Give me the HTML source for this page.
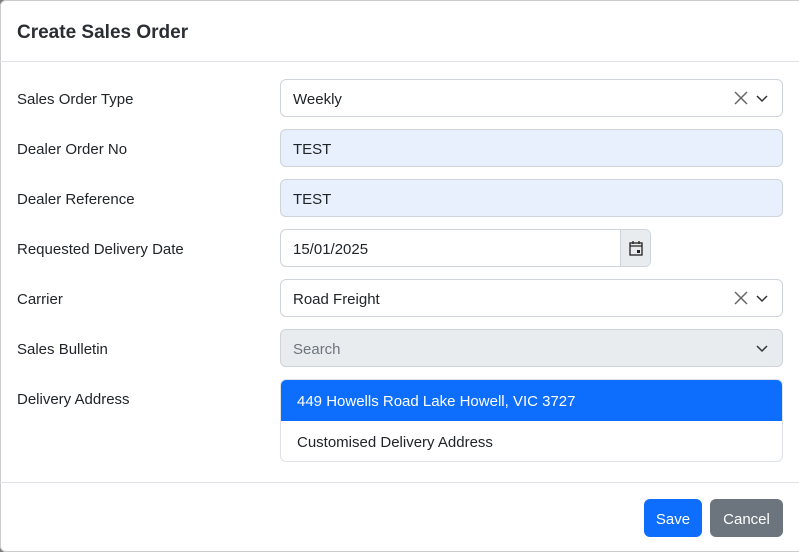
<!DOCTYPE html>
<html><head><style>
*{box-sizing:border-box}
body{margin:0;width:799px;height:552px;background:#7a7a7a;font-family:"Liberation Sans",sans-serif;color:#212529;overflow:hidden;position:relative}
.m{position:absolute;left:0;top:0;width:810px;height:552px;background:#fff;border-radius:6px;box-shadow:0 0 0 1px #ccc inset}
.h{height:62px;border-bottom:1px solid #dee2e6;padding:4px 17px 0;display:flex;align-items:center;font-size:19px;font-weight:bold;color:#2a2e33}
.lab{position:absolute;left:17px;font-size:15px;margin-top:1px}
.in{position:absolute;left:280px;width:503px;height:38px;border:1px solid #ced4da;border-radius:6px;font-size:15px;padding:2px 12px 0;display:flex;align-items:center}
.blue{background:#e8f0fe}
.ic{position:absolute;right:14px;top:11px;display:flex;gap:8px}
.f{position:absolute;top:482px;left:0;right:0;border-top:1px solid #dee2e6}
.b{position:absolute;top:499px;height:38px;border-radius:6px;color:#fff;font-size:15px;padding-top:2px;display:flex;align-items:center;justify-content:center}
</style></head><body><div class="m">
<div class="h">Create Sales Order</div>
<div class="lab" style="top:90px">Sales Order Type</div>
<div class="in" style="top:79px">Weekly<div class="ic"><svg width="14" height="14"><path d="M1 1L13 13M13 1L1 13" stroke="#666" stroke-width="1.5"/></svg><svg width="12" height="14"><path d="M1 5L6 10L11 5" stroke="#333" stroke-width="1.5" fill="none"/></svg></div></div>
<div class="lab" style="top:140px">Dealer Order No</div>
<div class="in blue" style="top:129px">TEST</div>
<div class="lab" style="top:190px">Dealer Reference</div>
<div class="in blue" style="top:179px">TEST</div>
<div class="lab" style="top:240px">Requested Delivery Date</div>
<div class="in" style="top:229px;width:371px">15/01/2025<div style="position:absolute;right:0;top:0;width:30px;height:36px;background:#e9ecef;border-left:1px solid #ced4da;border-radius:0 6px 6px 0"><svg width="14" height="16" style="position:absolute;left:8px;top:10px"><rect x="1" y="3" width="12" height="12" fill="none" stroke="#222" stroke-width="1.3"/><path d="M1 6H13M4 1V4M10 1V4" stroke="#222" stroke-width="1.3"/><rect x="8" y="10" width="3" height="3" fill="#222"/></svg></div></div>
<div class="lab" style="top:290px">Carrier</div>
<div class="in" style="top:279px">Road Freight<div class="ic"><svg width="14" height="14"><path d="M1 1L13 13M13 1L1 13" stroke="#666" stroke-width="1.5"/></svg><svg width="12" height="14"><path d="M1 5L6 10L11 5" stroke="#333" stroke-width="1.5" fill="none"/></svg></div></div>
<div class="lab" style="top:340px">Sales Bulletin</div>
<div class="in" style="top:329px;background:#e9ecef;color:#6c757d">Search<div class="ic"><svg width="12" height="14"><path d="M1 5L6 10L11 5" stroke="#333" stroke-width="1.5" fill="none"/></svg></div></div>
<div class="lab" style="top:390px">Delivery Address</div>
<div style="position:absolute;left:280px;top:379px;width:503px;height:83px;border:1px solid #dee2e6;border-radius:6px;overflow:hidden;font-size:15px">
<div style="height:42px;margin:-1px -1px 0;background:#0d6efd;color:#fff;padding:2px 17px 0;display:flex;align-items:center">449 Howells Road Lake Howell, VIC 3727</div>
<div style="height:41px;padding:2px 16px 0;display:flex;align-items:center">Customised Delivery Address</div></div>
<div class="f"></div>
<div class="b" style="left:644px;width:58px;background:#0d6efd">Save</div>
<div class="b" style="left:710px;width:73px;background:#6c757d">Cancel</div>
</div></body></html>
